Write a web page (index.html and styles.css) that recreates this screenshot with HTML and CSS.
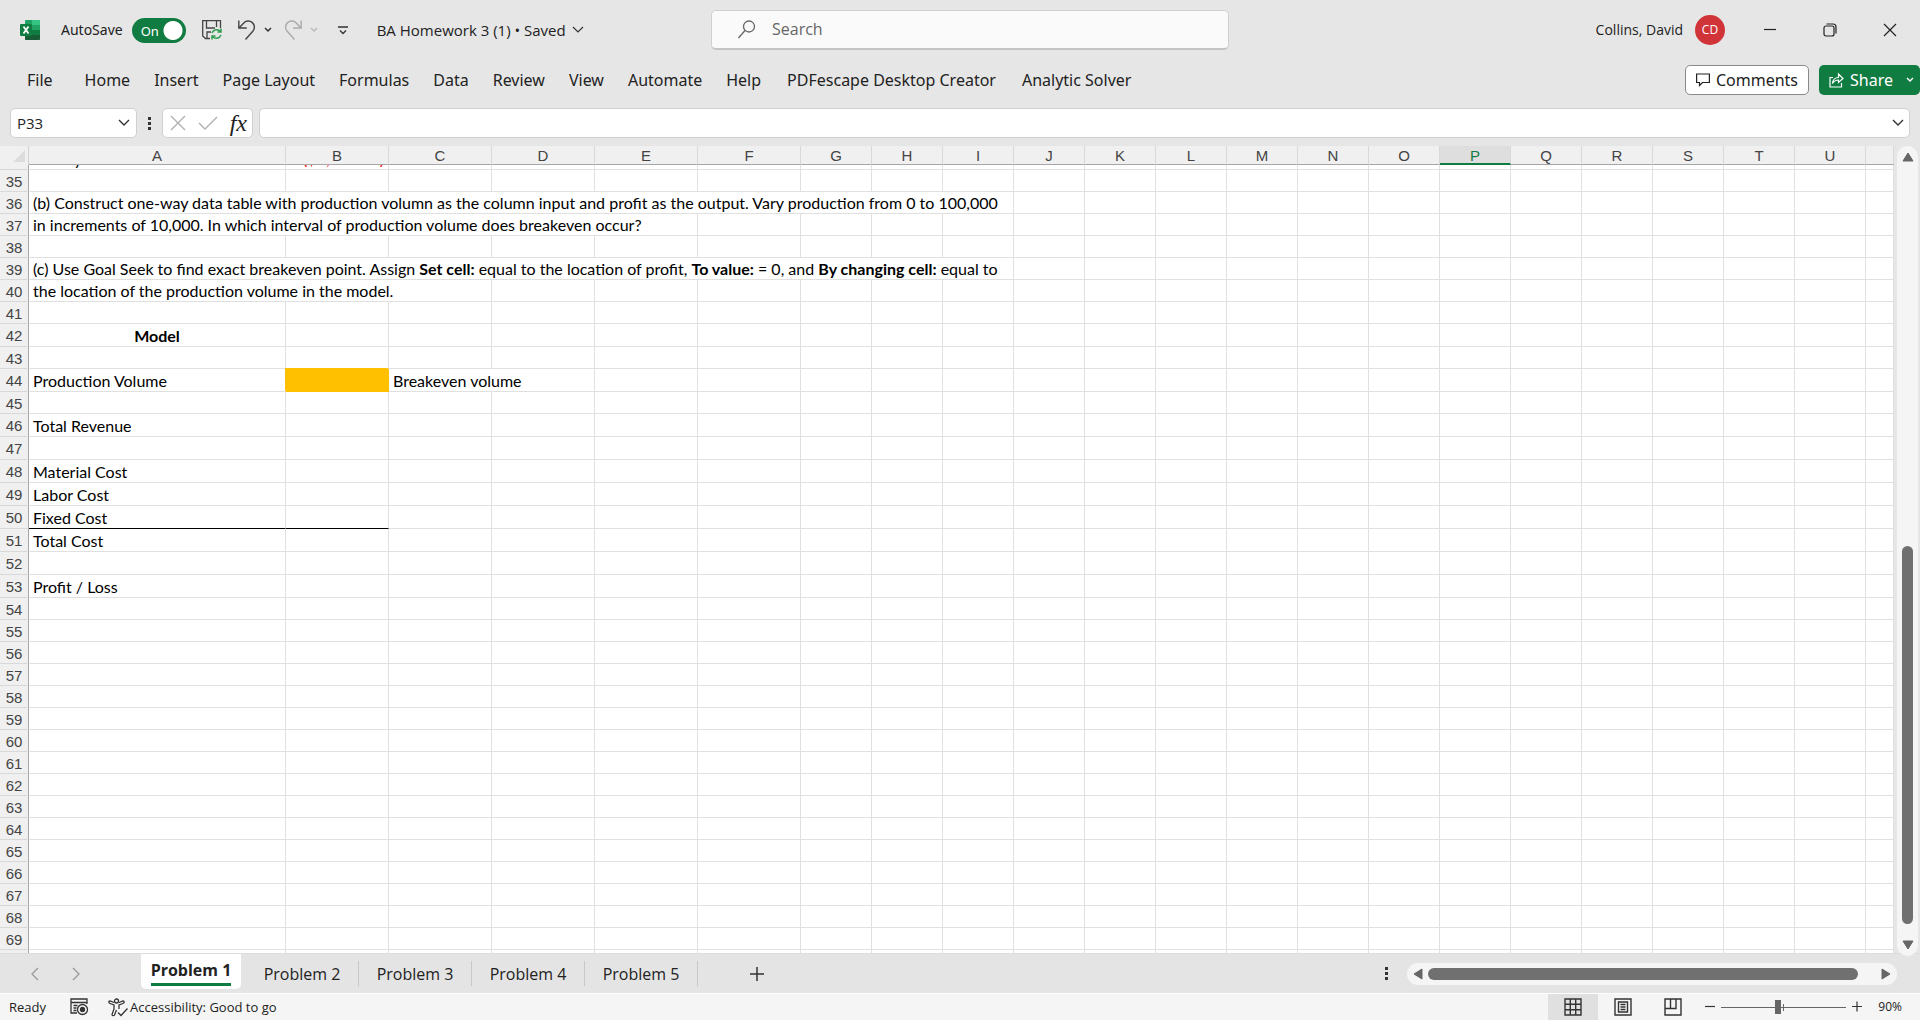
FILE: index.html
```html
<!DOCTYPE html>
<html lang="en">
<head>
<meta charset="utf-8">
<title>BA Homework 3 (1)</title>
<link rel="stylesheet" href="styles.css">
</head>
<body>
<header class="titlebar">
  <div class="title-left">
    <svg class="app-icon" width="20" height="20" viewBox="0 0 20 20" aria-hidden="true">
      <rect x="5" y="0" width="15" height="20" rx="1" fill="#21a366"/>
      <path d="M12 0h7a1 1 0 0 1 1 1v4h-8z" fill="#33c481"/>
      <path d="M5 10h7v5H5z" fill="#185c37"/>
      <path d="M12 10h8v5h-8z" fill="#107c41"/>
      <path d="M5 5h7v5H5z" fill="#107c41"/>
      <path d="M5 15h15v4a1 1 0 0 1-1 1H6a1 1 0 0 1-1-1z" fill="#185c37"/>
      <rect x="0" y="4" width="12" height="12" rx="1" fill="#107c41"/>
      <path d="M3.500 6.500l5 7M8.500 6.500l-5 7" stroke="#fff" stroke-width="1.800"/>
    </svg>
    <label class="autosave"><span>AutoSave</span>
      <span class="toggle"><input type="checkbox" checked><span class="toggle-text">On</span></span>
    </label>
    <button class="icon-btn save" aria-label="Save">
      <svg width="20" height="20" viewBox="0 0 20 20" fill="none" stroke="#444" stroke-width="1.300">
        <path d="M8 18.500H3.500L.7 16V.7h17.800V8M4.500 1v7h8.500M14.500 1v6M5 18.500V12h4"/>
        <path d="M10 13a5 5 0 0 1 8.500-1.500M19 8.500v3.500h-3.500M19 15a5 5 0 0 1-8.500 1.500M10 19.500V16h3.500" stroke="#2f9e4f" stroke-width="1.500"/>
      </svg>
    </button>
    <button class="icon-btn undo" aria-label="Undo">
      <svg width="18" height="20" viewBox="0 0 18 20" fill="none" stroke="#444" stroke-width="1.400"><path d="M.8.500V8h8M1 8l4.500-4.800A6 6 0 0 1 15 11L7.500 19.500"/></svg>
    </button>
    <button class="icon-btn" aria-label="Undo list"><svg width="8" height="6" viewBox="0 0 8 6" fill="none" stroke="#333" stroke-width="1.500"><path d="M1 1l3 3 3-3"/></svg></button>
    <button class="icon-btn redo" aria-label="Redo">
      <svg width="18" height="20" viewBox="0 0 18 20" fill="none" stroke="#aaa" stroke-width="1.400"><path d="M17.200.500V8h-8M17 8l-4.500-4.800A6 6 0 0 0 3 11l7.500 8.500"/></svg>
    </button>
    <button class="icon-btn" aria-label="Redo list"><svg width="8" height="6" viewBox="0 0 8 6" fill="none" stroke="#bbb" stroke-width="1.500"><path d="M1 1l3 3 3-3"/></svg></button>
    <button class="icon-btn customize" aria-label="Customize toolbar"><svg width="10" height="9" viewBox="0 0 10 9" fill="none" stroke="#333" stroke-width="1.300"><path d="M0 1h10M2 4.500l3 3 3-3"/></svg></button>
    <button class="doc-name">BA Homework 3 (1) • Saved
      <svg width="12" height="8" viewBox="0 0 12 8" fill="none" stroke="#333" stroke-width="1.200"><path d="M1 1l5 5 5-5"/></svg>
    </button>
  </div>
  <label class="search">
    <svg width="18" height="19" viewBox="0 0 18 19" fill="none" stroke="#666" stroke-width="1.300"><circle cx="11" cy="6.500" r="5.500"/><path d="M7 10.500L.5 18"/></svg>
    <input type="text" placeholder="Search" aria-label="Search">
  </label>
  <div class="title-right">
    <span class="user">Collins, David</span>
    <button class="avatar">CD</button>
    <button class="win-btn" aria-label="Minimize"><svg width="14" height="14" viewBox="0 0 14 14" fill="none" stroke="#222" stroke-width="1.200"><path d="M1 6.500h12"/></svg></button>
    <button class="win-btn" aria-label="Restore"><svg width="14" height="14" viewBox="0 0 14 14" fill="none" stroke="#222" stroke-width="1.200"><rect x="1" y="3" width="10" height="10" rx="2"/><path d="M3.500 1H10a3 3 0 0 1 3 3v6.500"/></svg></button>
    <button class="win-btn" aria-label="Close"><svg width="14" height="14" viewBox="0 0 14 14" fill="none" stroke="#222" stroke-width="1.200"><path d="M1 1l12 12M13 1L1 13"/></svg></button>
  </div>
</header>

<nav class="ribbon">
  <button class="ribbon-tab file">File</button>
  <button class="ribbon-tab">Home</button>
  <button class="ribbon-tab">Insert</button>
  <button class="ribbon-tab">Page Layout</button>
  <button class="ribbon-tab">Formulas</button>
  <button class="ribbon-tab">Data</button>
  <button class="ribbon-tab">Review</button>
  <button class="ribbon-tab">View</button>
  <button class="ribbon-tab">Automate</button>
  <button class="ribbon-tab">Help</button>
  <button class="ribbon-tab add-in">PDFescape Desktop Creator</button>
  <button class="ribbon-tab add-in">Analytic Solver</button>
  <div class="ribbon-actions">
    <button class="comments"><svg width="14" height="14" viewBox="0 0 14 14" fill="none" stroke="#222" stroke-width="1.200"><path d="M.6 1h12.800v8.500H6.500L3.500 12.500v-3H.6z"/></svg>Comments</button>
    <button class="share"><svg width="15" height="16" viewBox="0 0 15 16" fill="none" stroke="#fff" stroke-width="1.200"><path d="M4 5.500H1V15h11.500v-4"/><path d="M3.500 11.500C4 7 6.500 5.500 9.500 5.500V2L14 6.500 9.500 10.500V8C7 8 5 9 3.500 11.500z"/></svg><span>Share</span><svg class="share-more" width="8" height="6" viewBox="0 0 8 6" fill="none" stroke="#fff" stroke-width="1.400"><path d="M1 1l3 3 3-3"/></svg></button>
  </div>
</nav>

<div class="formula-row">
  <div class="name-box">
    <input type="text" value="P33" aria-label="Name box">
    <button class="icon-btn" aria-label="Names"><svg width="12" height="8" viewBox="0 0 12 8" fill="none" stroke="#333" stroke-width="1.400"><path d="M1 1l5 5 5-5"/></svg></button>
  </div>
  <span class="dots"></span>
  <div class="fx-box">
    <button class="icon-btn" aria-label="Cancel"><svg width="16" height="16" viewBox="0 0 16 16" fill="none" stroke="#b0b0b0" stroke-width="1.400"><path d="M1 1l14 14M15 1L1 15"/></svg></button>
    <button class="icon-btn" aria-label="Enter"><svg width="20" height="14" viewBox="0 0 20 14" fill="none" stroke="#b0b0b0" stroke-width="1.400"><path d="M1 7l6 6L19 1"/></svg></button>
    <button class="icon-btn fx">fx</button>
  </div>
  <div class="formula">
    <input type="text" aria-label="Formula bar">
    <button class="icon-btn" aria-label="Expand"><svg width="12" height="8" viewBox="0 0 12 8" fill="none" stroke="#333" stroke-width="1.400"><path d="M1 1l5 5 5-5"/></svg></button>
  </div>
</div>

<main class="workspace">
  <div class="grid">
    <table class="sheet">
      <colgroup id="cols"></colgroup>
      <thead><tr id="letters"></tr></thead>
      <tbody id="rows"></tbody>
    </table>
  </div>
  <div class="vscroll">
    <svg width="12" height="10" viewBox="0 0 12 10"><path d="M6 1L11 9H1z" fill="#666" stroke="#666" stroke-linejoin="round"/></svg>
    <div class="vtrack"><div class="vthumb"></div></div>
    <svg width="12" height="10" viewBox="0 0 12 10"><path d="M6 9L1 1h10z" fill="#666" stroke="#666" stroke-linejoin="round"/></svg>
  </div>
</main>

<div class="tabbar">
  <div class="tab-nav">
    <button class="icon-btn" aria-label="Previous sheet"><svg width="8" height="14" viewBox="0 0 8 14" fill="none" stroke="#999" stroke-width="1.300"><path d="M7 1L1 7l6 6"/></svg></button>
    <button class="icon-btn" aria-label="Next sheet"><svg width="8" height="14" viewBox="0 0 8 14" fill="none" stroke="#999" stroke-width="1.300"><path d="M1 1l6 6-6 6"/></svg></button>
  </div>
  <button class="sheet-tab active"><span>Problem 1</span></button>
  <button class="sheet-tab">Problem 2</button>
  <button class="sheet-tab">Problem 3</button>
  <button class="sheet-tab">Problem 4</button>
  <button class="sheet-tab">Problem 5</button>
  <button class="icon-btn add" aria-label="New sheet"><svg width="14" height="14" viewBox="0 0 14 14" fill="none" stroke="#333" stroke-width="1.500"><path d="M7 0v14M0 7h14"/></svg></button>
  <span class="dots tab-dots"></span>
  <div class="hscroll">
    <svg width="10" height="12" viewBox="0 0 10 12"><path d="M1 6L9 1v10z" fill="#666" stroke="#666" stroke-linejoin="round"/></svg>
    <div class="htrack"><div class="hthumb"></div></div>
    <svg width="10" height="12" viewBox="0 0 10 12"><path d="M9 6L1 11V1z" fill="#666" stroke="#666" stroke-linejoin="round"/></svg>
  </div>
</div>

<footer class="statusbar">
  <span>Ready</span>
  <button class="icon-btn macro" aria-label="Record macro"><svg width="19" height="18" viewBox="0 0 19 18" fill="none" stroke="#333" stroke-width="1.300"><path d="M7 15H1V1h16v5M1 4.500h16M3.500 7.500h4M3.500 10h3M3.500 12.500h3"/><circle cx="12.500" cy="11.500" r="5"/><circle cx="12.500" cy="11.500" r="2" fill="#333"/></svg></button>
  <button class="access"><svg width="21" height="19" viewBox="0 0 21 19" fill="none" stroke="#333" stroke-width="1.300"><circle cx="8.500" cy="3" r="2"/><path d="M6 4.500L2 3C.5 3 .5 5 2 5.500L6 7v4l-2 5.500c0 1.500 2 1.500 2.500.500L8.500 12M11 4.500L15 3c1.500 0 1.500 2 0 2.500L11 7v4M10 14.500l3 3 6.500-7"/></svg>Accessibility: Good to go</button>
  <div class="view-tools">
    <button class="view-btn on" aria-label="Normal view"><svg width="18" height="18" viewBox="0 0 18 18" fill="none" stroke="#333" stroke-width="1.400"><path d="M1 1h16v16H1zM1 6.300h16M1 11.700h16M6.300 1v16M11.700 1v16"/></svg></button>
    <button class="view-btn" aria-label="Page layout view"><svg width="18" height="18" viewBox="0 0 18 18" fill="none" stroke="#333" stroke-width="1.400"><path d="M1 1h16v16H1zM4.500 4h9v10h-9zM6.500 6.500h5M6.500 9h5M6.500 11.500h5"/></svg></button>
    <button class="view-btn" aria-label="Page break view"><svg width="18" height="18" viewBox="0 0 18 18" fill="none" stroke="#333" stroke-width="1.400"><path d="M1 1h16v16H1zM1 10.500h11V1M6.500 1v9.500"/></svg></button>
    <button class="icon-btn zoom-out" aria-label="Zoom out"><svg width="10" height="12" viewBox="0 0 10 12" stroke="#333" stroke-width="1.200"><path d="M0 5.500h10"/></svg></button>
    <input class="zoom" type="range" min="0" max="100" value="45" aria-label="Zoom">
    <button class="icon-btn zoom-in" aria-label="Zoom in"><svg width="10" height="12" viewBox="0 0 10 12" stroke="#333" stroke-width="1.200"><path d="M0 5.500h10M5 .5v10"/></svg></button>
    <span class="percent">90%</span>
  </div>
</footer>
<script src="sheet.js"></script>
</body>
</html>
```
FILE: sheet.js
```js
const letters = 'ABCDEFGHIJKLMNOPQRSTU'.split('');
const firstRow = 35;
const lastRow = 69;
const lastColumn = letters.length;
const tallRows = new Set([42, 44, 46, 47, 48, 49, 50, 51, 52, 53]);

// Cells with content, by row and column index; span is the number of columns the text runs over.
const cells = {
  36: { 0: { span: 9, html: '(b) Construct one-way data table with production volumn as the column input and profit as the output. Vary production from 0 to 100,000' } },
  37: { 0: { span: 5, html: 'in increments of 10,000. In which interval of production volume does breakeven occur?' } },
  39: { 0: { span: 9, html: '(c) Use Goal Seek to find exact breakeven point. Assign <b>Set cell:</b> equal to the location of profit, <b>To value:</b> = 0, and <b>By changing cell:</b> equal to' } },
  40: { 0: { span: 3, html: 'the location of the production volume in the model.' } },
  42: { 0: { cls: 'heading', html: 'Model' } },
  44: { 0: { html: 'Production Volume' }, 1: { cls: 'fill' }, 2: { span: 2, html: 'Breakeven volume' } },
  46: { 0: { html: 'Total Revenue' } },
  48: { 0: { html: 'Material Cost' } },
  49: { 0: { html: 'Labor Cost' } },
  50: { 0: { cls: 'sum', html: 'Fixed Cost' }, 1: { cls: 'sum' } },
  51: { 0: { html: 'Total Cost' } },
  53: { 0: { html: 'Profit / Loss' } },
};

function colClass(i) {
  if (i < 0) return 'col-head';
  if (i === 0) return 'col-a';
  if (i < 6) return 'col-wide';
  return i < lastColumn ? 'col-narrow' : 'col-rest';
}

let cols = '';
for (let i = -1; i <= lastColumn; i++) cols += `<col class="${colClass(i)}">`;
document.getElementById('cols').innerHTML = cols;

document.getElementById('letters').innerHTML =
  '<th class="corner"><svg width="12" height="12" viewBox="0 0 12 12"><path d="M12 0v12H0z" fill="#dcdcdc"/></svg></th>' +
  letters.map(l => `<th class="letter${l === 'P' ? ' current' : ''}" scope="col">${l}</th>`).join('') +
  '<th class="letter"></th>';

// The row scrolled mostly out of view at the top.
let body = '<tr class="cut"><th scope="row"><div>34</div></th><td><div>Facility</div></td><td class="loss"><div>($5,000.00)</div></td>' +
  '<td></td>'.repeat(lastColumn - 1) + '</tr>';

for (let r = firstRow; r <= lastRow; r++) {
  body += `<tr class="${tallRows.has(r) ? 'tall' : 'row'}"><th scope="row">${r}</th>`;
  const row = cells[r] || {};
  for (let c = 0; c <= lastColumn; c++) {
    const cell = row[c] || {};
    const span = cell.span || 1;
    body += `<td${cell.cls ? ` class="${cell.cls}"` : ''}${span > 1 ? ` colspan="${span}"` : ''}>${cell.html || ''}</td>`;
    c += span - 1;
  }
  body += '</tr>';
}
// The start of the next row shows below the last full one.
body += '<tr class="row"><th></th>' + '<td></td>'.repeat(lastColumn + 1) + '</tr>';
document.getElementById('rows').innerHTML = body;
```
FILE: styles.css
```css
* { box-sizing: border-box; }

body {
  margin: 0;
  height: 100vh;
  overflow: hidden;
  display: flex;
  flex-direction: column;
  background: #e6e6e6;
  color: #222;
  font: 16px/20px "Open Sans", "Noto Sans", sans-serif;
}

button, input { font: inherit; color: inherit; }
button { padding: 0; border: 0; background: none; white-space: nowrap; }
input { border: 0; background: none; outline: 0; min-width: 0; }
svg { display: block; flex: none; }
.icon-btn { display: flex; align-items: center; justify-content: center; }

/* Title bar */
.titlebar {
  display: grid;
  grid-template-columns: 711fr 518fr 691fr;
  height: 60px;
  flex: none;
  font-size: 15px;
}
.title-left { display: flex; align-items: center; padding-left: 20px; }
.autosave { display: flex; align-items: center; gap: 9px; margin-left: 21px; font: 14px/20px "Noto Sans", "Open Sans", sans-serif; }
.toggle { position: relative; display: flex; }
.toggle input {
  appearance: none;
  width: 54px;
  height: 25px;
  margin: 0;
  border-radius: 13px;
  background: radial-gradient(circle at 41px 50%, #fff 9px, transparent 10px) #107c41;
}
.toggle-text { position: absolute; left: 9px; top: 3px; color: #fff; font-size: 13px; }
.save { margin: 0 16px; }
.undo, .redo { margin-right: 8px; }
.redo { margin-left: 12px; }
.customize { margin-left: 20px; }
.doc-name { display: flex; align-items: center; gap: 6px; margin-left: 29px; }
.search {
  display: flex;
  align-items: center;
  gap: 14px;
  height: 40px;
  margin-top: 10px;
  padding-left: 26px;
  border: 1px solid #d0d0d0;
  border-bottom: 2px solid #c4c4c4;
  border-radius: 5px;
  background: #fafafa;
  font-size: 16px;
}
.search input { flex: 1; padding: 0 2px 2px; }
.search input::placeholder { color: #666; opacity: 1; }
.title-right { display: flex; align-items: center; justify-content: flex-end; }
.user { font-size: 14px; }
.avatar {
  width: 30px;
  height: 30px;
  margin: 0 15px 0 12px;
  border-radius: 50%;
  background: #d13438;
  color: #fff;
  font-size: 12px;
}
.win-btn { display: flex; align-items: center; justify-content: center; width: 60px; height: 40px; }

/* Ribbon */
.ribbon { display: flex; align-items: center; height: 40px; flex: none; padding-left: 15px; font-family: "Noto Sans", "Open Sans", sans-serif; }
.ribbon-tab { padding: 0 12px; height: 32px; }
.file { margin-right: 8px; }
.add-in { margin-left: 2px; }
.ribbon-actions { display: flex; gap: 10px; margin-left: auto; }
.comments, .share { display: flex; align-items: center; height: 30px; border-radius: 5px; }
.comments { gap: 6px; padding: 0 10px; border: 1px solid #8a8a8a; background: #fff; }
.share { gap: 6px; padding: 0 6px 0 10px; background: #107c41; color: #fff; }
.share-more { margin-left: 7px; }

/* Formula bar */
.formula-row { display: flex; align-items: center; height: 46px; flex: none; padding: 0 10px; }
.name-box, .fx-box, .formula {
  display: flex;
  align-items: center;
  height: 30px;
  border: 1px solid #d0d0d0;
  border-radius: 5px;
  background: #fff;
}
.name-box { width: 127px; padding: 0 6px; font-size: 15px; }
.name-box input { flex: 1; padding: 0; }
.dots { width: 3px; height: 13px; margin: 0 11px; background: linear-gradient(#333 3px, transparent 3px 5px, #333 5px 8px, transparent 8px 10px, #333 10px); }
.fx-box { width: 91px; justify-content: space-between; padding: 0 5px 0 7px; }
.fx { font: italic 24px/20px "Liberation Serif", serif; color: #222; }
.formula { flex: 1; margin-left: 6px; padding-right: 5px; }
.formula input { flex: 1; }

/* Worksheet */
.workspace { display: flex; flex: 1; min-height: 0; }
.grid { flex: 1; min-width: 0; overflow: hidden; background: #fff; }
.sheet { width: 100%; table-layout: fixed; border-collapse: separate; border-spacing: 0; }
.col-head { width: 29px; }
.col-a { width: 257px; }
.col-wide { width: 103px; }
.col-narrow { width: 71px; }
.sheet th {
  padding: 2px 0 0;
  border-right: 1px solid #a6a6a6;
  border-bottom: 1px solid #d9d9d9;
  background: #f0f0f0;
  color: #444;
  font: 15px/18px "Liberation Sans", Arial, sans-serif;
}
.sheet .letter { height: 19px; border-right-color: #d9d9d9; border-bottom-color: #a6a6a6; line-height: 16px; }
.sheet .current { border-bottom: 2px solid #107c41; background: #dedede; color: #107c41; line-height: 15px; }
.sheet .corner { border-color: #f0f0f0 #d0d0d0 #f0f0f0; }
.corner svg { margin-left: 13px; }
.sheet td {
  padding: 0 4px;
  border-right: 1px solid #e0e0e0;
  border-bottom: 1px solid #e0e0e0;
  color: #000;
  font: 16px/21px Lato, Carlito, sans-serif;
  white-space: nowrap;
}
.sheet b { font-weight: 700; }
.row { height: 22px; }
.tall { height: 23px; }
.cut { height: 5px; }
.sheet .cut th { padding: 0; }
.cut div { display: flex; align-items: flex-end; height: 4px; overflow: hidden; }
.cut th div { justify-content: center; }
.cut .loss div { justify-content: flex-end; color: #f00; }
.sheet .heading { text-align: center; font-weight: 700; }
.sheet .fill { border-color: #ffc000; background: #ffc000; box-shadow: -1px -1px #ffc000; }
.sheet .sum { border-bottom-color: #000; }
.vscroll {
  display: flex;
  flex-direction: column;
  align-items: center;
  width: 21px;
  margin: 0 2px -3px 3px;
  padding: 6px 0;
  border-radius: 11px;
  background: #f5f5f5;
  z-index: 1;
}
.vtrack { flex: 1; display: flex; flex-direction: column; padding: 3px 0; }
.vthumb { width: 11px; height: 49%; margin: auto 0 13px; border-radius: 6px; background: #707070; }

/* Sheet tabs */
.tabbar { display: flex; align-items: center; height: 40px; flex: none; border-top: 1px solid #dcdcdc; background: #e4e4e4; }
.tab-nav { display: flex; gap: 33px; width: 141px; padding-left: 31px; }
.sheet-tab {
  width: 113px;
  height: 25px;
  border-right: 1px solid #c8c8c8;
}
.sheet-tab.active {
  align-self: flex-start;
  width: 100px;
  height: 35px;
  margin-right: 5px;
  border: 0;
  border-radius: 0 0 5px 5px;
  background: #fff;
  font-weight: 700;
}
.active span { display: inline-block; border-bottom: 3px solid #107c41; line-height: 25px; }
.add { margin-left: 52px; }
.tab-dots { margin-left: auto; margin-right: 19px; }
.hscroll {
  display: flex;
  align-items: center;
  width: 490px;
  height: 22px;
  margin-right: 23px;
  padding: 0 6px;
  border-radius: 11px;
  background: #f5f5f5;
}
.htrack { flex: 1; padding: 0 5px; }
.hthumb { width: 96%; height: 12px; border-radius: 6px; background: #707070; }

/* Status bar */
.statusbar {
  display: flex;
  align-items: center;
  height: 27px;
  flex: none;
  padding-left: 9px;
  border-top: 1px solid #fff;
  background: #f5f5f5;
  font-size: 13px;
}
.macro { margin: 0 19px 0 24px; }
.access { display: flex; align-items: center; gap: 1px; }
.view-tools { display: flex; align-items: center; align-self: stretch; margin-left: auto; padding-right: 18px; }
.view-btn { display: flex; align-items: center; justify-content: center; align-self: stretch; width: 50px; }
.view-btn.on { background: #e0e0e0; }
.zoom-out { margin: 0 6px 0 7px; }
.zoom {
  appearance: none;
  width: 125px;
  height: 14px;
  margin: 0;
  background:
    linear-gradient(#666, #666) 62px 4px / 1px 7px no-repeat,
    linear-gradient(#666, #666) 0 7px / 100% 1px no-repeat;
}
.zoom::-webkit-slider-thumb { appearance: none; width: 6px; height: 14px; background: #666; }
.zoom-in { margin: 0 16px 0 6px; }
.percent { font-size: 12px; }
```
